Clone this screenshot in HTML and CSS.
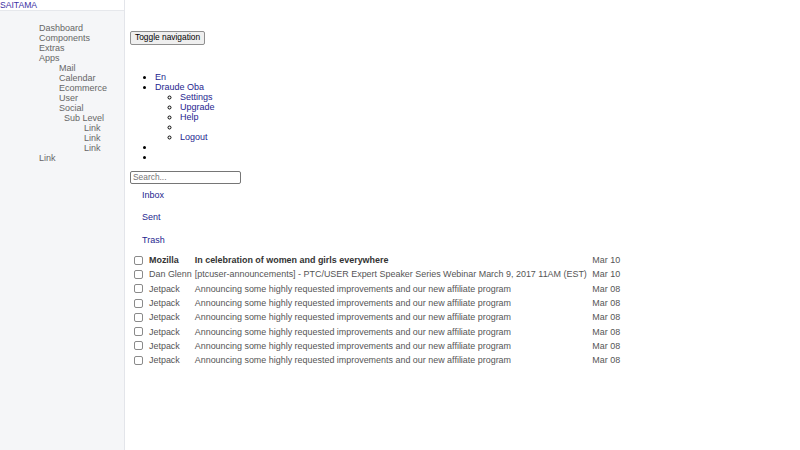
FILE: index.html
```html
<!DOCTYPE html>
<html lang="en">
<head>
    <meta charset="UTF-8">
    <meta name="viewport" content="width=device-width, initial-scale=1.0">
    <title>Saitama - Mail</title>
    <link rel="stylesheet" href="styles.css">
</head>
<body>
    <div class="app">
        <aside class="sidebar">
            <div class="brand"><a href="#">SAITAMA</a></div>
            <ul class="side-nav">
                <li><a href="#">Dashboard</a></li>
                <li><a href="#">Components</a></li>
                <li><a href="#">Extras</a></li>
                <li><a href="#">Apps</a>
                    <ul>
                        <li><a href="#">Mail</a></li>
                        <li><a href="#">Calendar</a></li>
                        <li><a href="#">Ecommerce</a></li>
                        <li><a href="#">User</a></li>
                        <li><a href="#">Social</a></li>
                        <li class="sub-level"><a href="#">Sub Level</a>
                            <ul>
                                <li><a href="#">Link</a></li>
                                <li><a href="#">Link</a></li>
                                <li><a href="#">Link</a></li>
                            </ul>
                        </li>
                    </ul>
                </li>
                <li><a href="#">Link</a></li>
            </ul>
        </aside>

        <main class="main">
            <div class="topbar">
                <button class="toggle">Toggle navigation</button>
                <ul class="top-menu">
                    <li><a href="#">En</a></li>
                    <li><a href="#">Draude Oba</a>
                        <ul>
                            <li><a href="#">Settings</a></li>
                            <li><a href="#">Upgrade</a></li>
                            <li><a href="#">Help</a></li>
                            <li></li>
                            <li><a href="#">Logout</a></li>
                        </ul>
                    </li>
                    <li></li>
                    <li></li>
                </ul>
            </div>

            <input class="search" type="text" placeholder="Search...">

            <ul class="folders">
                <li><a href="#">Inbox</a></li>
                <li><a href="#">Sent</a></li>
                <li><a href="#">Trash</a></li>
            </ul>

            <table class="mails">
                <tr class="unread">
                    <td><input type="checkbox"></td>
                    <td>Mozilla</td>
                    <td>In celebration of women and girls everywhere</td>
                    <td>Mar 10</td>
                </tr>
                <tr>
                    <td><input type="checkbox"></td>
                    <td>Dan Glenn</td>
                    <td>[ptcuser-announcements] - PTC/USER Expert Speaker Series Webinar March 9, 2017 11AM (EST)</td>
                    <td>Mar 10</td>
                </tr>
                <tr>
                    <td><input type="checkbox"></td>
                    <td>Jetpack</td>
                    <td>Announcing some highly requested improvements and our new affiliate program</td>
                    <td>Mar 08</td>
                </tr>
                <tr>
                    <td><input type="checkbox"></td>
                    <td>Jetpack</td>
                    <td>Announcing some highly requested improvements and our new affiliate program</td>
                    <td>Mar 08</td>
                </tr>
                <tr>
                    <td><input type="checkbox"></td>
                    <td>Jetpack</td>
                    <td>Announcing some highly requested improvements and our new affiliate program</td>
                    <td>Mar 08</td>
                </tr>
                <tr>
                    <td><input type="checkbox"></td>
                    <td>Jetpack</td>
                    <td>Announcing some highly requested improvements and our new affiliate program</td>
                    <td>Mar 08</td>
                </tr>
                <tr>
                    <td><input type="checkbox"></td>
                    <td>Jetpack</td>
                    <td>Announcing some highly requested improvements and our new affiliate program</td>
                    <td>Mar 08</td>
                </tr>
                <tr>
                    <td><input type="checkbox"></td>
                    <td>Jetpack</td>
                    <td>Announcing some highly requested improvements and our new affiliate program</td>
                    <td>Mar 08</td>
                </tr>
            </table>
        </main>
    </div>
</body>
</html>
```

FILE: styles.css
```css
*{
    box-sizing: border-box;
}
body{
    margin: 0;
    font-family: 'Liberation Sans', Arial, sans-serif;
    font-size: 9px;
    line-height: 10px;
    color: #555;
    background: #fff;
}
a{
    color: #26268f;
    text-decoration: none;
}
ul{
    margin: 0;
}

.app{
    display: flex;
    min-height: 450px;
}

/* sidebar */
.sidebar{
    width: 125px;
    flex-shrink: 0;
    background: #f5f6f8;
    border-right: 1px solid #e3e5ea;
}
.sidebar .brand{
    height: 11px;
    line-height: 10px;
    background: #fff;
    border-bottom: 1px solid #e6e8ec;
}
.sidebar .brand a{
    color: #3b31a3;
    font-size: 8.6px;
}
.side-nav{
    list-style: none;
    padding: 12px 0 0 39px;
}
.side-nav ul{
    list-style: none;
    padding-left: 20px;
}
.side-nav a{
    color: #666;
}
.side-nav .sub-level{
    padding-left: 5px;
}

/* main */
.main{
    flex: 1;
    padding-left: 5px;
}
.topbar{
    padding-top: 31px;
}
.toggle{
    height: 13.5px;
    padding: 0 4px;
    font-family: inherit;
    font-size: 8.4px;
    line-height: 11px;
    color: #000;
    background: #efefef;
    border: 1px solid #8f8f8f;
    border-radius: 2px;
}
.top-menu{
    margin: 27px 0 9px;
    padding-left: 25px;
    color: #000;
}
.top-menu ul{
    padding-left: 25px;
}
.top-menu li{
    min-height: 10px;
}

.search{
    display: block;
    width: 111px;
    height: 13px;
    padding: 0 2px;
    font-family: inherit;
    font-size: 8.4px;
    border: 1px solid #767676;
    border-radius: 2px;
}
.search::placeholder{
    color: #757575;
}

.folders{
    list-style: none;
    padding: 0;
    margin: 0;
}
.folders li{
    height: 22.5px;
    line-height: 22.5px;
    padding-left: 12px;
}

.mails{
    border-collapse: collapse;
    margin-top: 2px;
    font-size: 8.95px;
}
.mails td{
    height: 14.3px;
    padding: 0 1.5px;
    white-space: nowrap;
    color: #555;
}
.mails td:first-child{
    padding: 0 4px;
}
.mails td:nth-child(2){
    padding-left: 2px;
}
.mails td:nth-child(3){
    padding-right: 4px;
}
.mails input{
    -webkit-appearance: none;
    appearance: none;
    display: block;
    width: 9px;
    height: 9px;
    margin: 0;
    background: #fff;
    border: 1px solid #8a8a8a;
    border-radius: 2px;
}
.mails .unread td{
    font-weight: bold;
    color: #333;
}
.mails .unread td:last-child{
    font-weight: normal;
    color: #555;
}
```
